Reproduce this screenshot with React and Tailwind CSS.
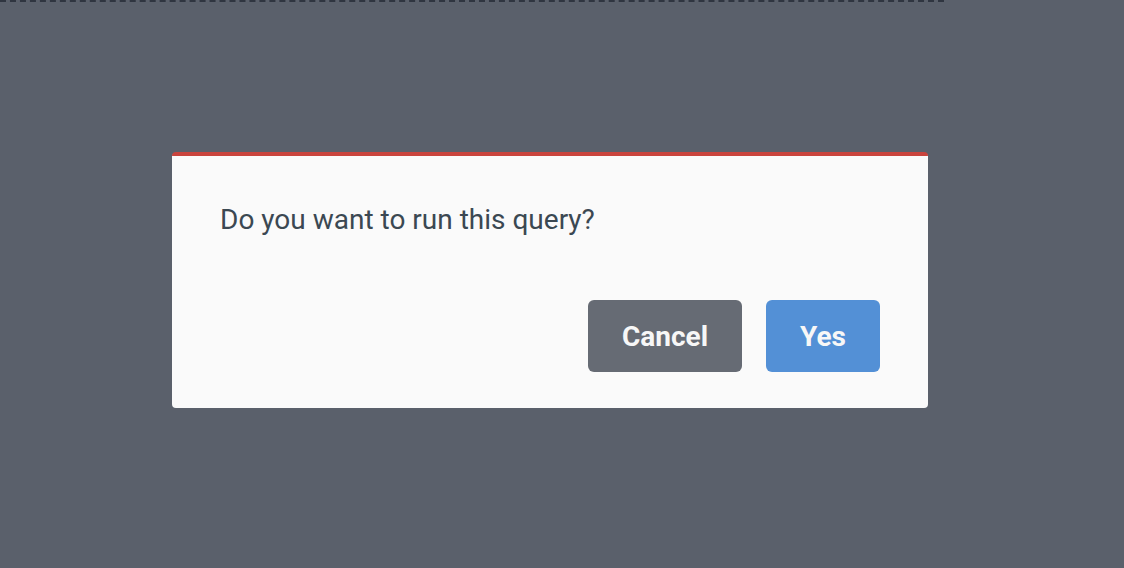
import React from 'react';

export default function App() {
    return (
        <div className="w-full h-[568px] bg-[#5a606b] overflow-hidden" style={{ fontFamily: 'Roboto, "Liberation Sans", sans-serif' }}>
            <div className="w-[944px] border-t-2 border-dashed border-[#2f3540]" />
            <div className="w-[1100px] flex justify-center pt-[150px]">
                <div className="w-[756px] bg-[#fafafa] rounded-[4px] border-t-4 border-[#c9443d] pt-[46px] pb-[36px]">
                    <p className="px-12 text-[28px] leading-[36px] text-[#3b4852]">Do you want to run this query?</p>
                    <div className="mt-[62px] flex justify-end gap-6 pr-12">
                        <button className="h-[72px] px-[34px] pt-[2px] rounded-[6px] bg-[#666b74] text-[#f7f7f7] text-[28px] font-bold">
                            Cancel
                        </button>
                        <button className="h-[72px] px-[34px] pt-[2px] rounded-[6px] bg-[#5390d6] text-[#f7f7f7] text-[28px] font-bold">
                            Yes
                        </button>
                    </div>
                </div>
            </div>
        </div>
    );
}
